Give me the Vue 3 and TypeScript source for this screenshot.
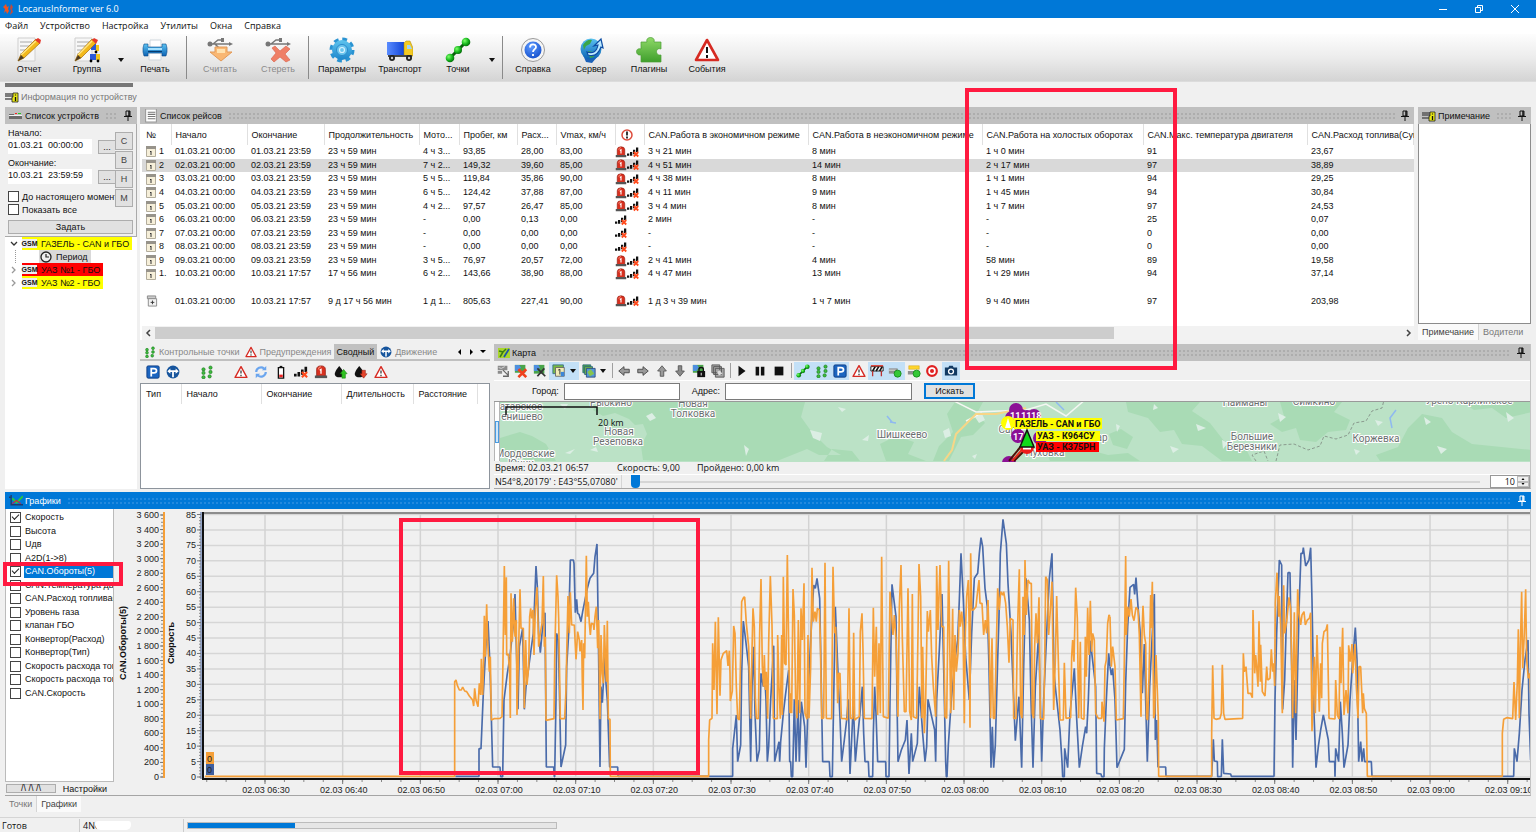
<script setup lang="ts">
import { ref } from 'vue'

interface ToolItem { icon: string; label: string; disabled?: boolean; menu?: boolean }
interface Trip { no: string; start: string; end: string; cells: string[]; siren: boolean; eco: string; rest: string[]; current?: boolean }

const menu = ['Файл', 'Устройство', 'Настройка', 'Утилиты', 'Окна', 'Справка']

const toolGroups: ToolItem[][] = [
  [
    { icon: 'report', label: 'Отчет' },
    { icon: 'group', label: 'Группа', menu: true },
    { icon: 'print', label: 'Печать' },
  ],
  [
    { icon: 'read', label: 'Считать', disabled: true },
    { icon: 'erase', label: 'Стереть', disabled: true },
  ],
  [
    { icon: 'gear', label: 'Параметры' },
    { icon: 'truck', label: 'Транспорт' },
    { icon: 'route', label: 'Точки', menu: true },
  ],
  [
    { icon: 'help', label: 'Справка' },
    { icon: 'globe', label: 'Сервер' },
    { icon: 'puzzle', label: 'Плагины' },
    { icon: 'warn', label: 'События' },
  ],
]

const day = (no: string, d: string, moto: string, km: string, fuel: string, v: string, siren: boolean, eco: string, rest: string[], dur = '23 ч 59 мин', endTime = '23:59'): Trip => ({
  no, start: `${d}.03.21 00:00`, end: `${d}.03.21 ${endTime}`, cells: [dur, moto, km, fuel, v], siren, eco, rest, current: d === '02',
})

const trips: Trip[] = [
  day('1', '01', '4 ч 3...', '93,85', '28,00', '83,00', true, '3 ч 21 мин', ['8 мин', '1 ч 0 мин', '91', '23,67']),
  day('2', '02', '7 ч 2...', '149,32', '39,60', '85,00', true, '4 ч 51 мин', ['14 мин', '2 ч 17 мин', '97', '38,89']),
  day('3', '03', '5 ч 5...', '119,84', '35,86', '90,00', true, '4 ч 38 мин', ['8 мин', '1 ч 1 мин', '94', '29,25']),
  day('4', '04', '6 ч 5...', '124,42', '37,88', '87,00', true, '4 ч 11 мин', ['9 мин', '1 ч 45 мин', '94', '30,84']),
  day('5', '05', '4 ч 2...', '97,57', '26,47', '85,00', true, '3 ч 4 мин', ['8 мин', '1 ч 7 мин', '97', '24,53']),
  day('6', '06', '-', '0,00', '0,13', '0,00', false, '2 мин', ['-', '-', '25', '0,07']),
  day('7', '07', '-', '0,00', '0,00', '0,00', false, '-', ['-', '-', '0', '0,00']),
  day('8', '08', '-', '0,00', '0,00', '0,00', false, '-', ['-', '-', '0', '0,00']),
  day('9', '09', '3 ч 5...', '76,97', '20,57', '72,00', true, '2 ч 41 мин', ['4 мин', '58 мин', '89', '19,58']),
  day('1.', '10', '6 ч 2...', '143,66', '38,90', '88,00', true, '4 ч 47 мин', ['13 мин', '1 ч 29 мин', '94', '37,14'], '17 ч 56 мин', '17:57'),
]
const total: Trip = {
  no: '', start: '01.03.21 00:00', end: '10.03.21 17:57', cells: ['9 д 17 ч 56 мин', '1 д 1...', '805,63', '227,41', '90,00'],
  siren: true, eco: '1 д 3 ч 39 мин', rest: ['1 ч 7 мин', '9 ч 40 мин', '97', '203,98'],
}

const quick = ['С', 'В', 'Н', 'М']
const summaryTools = ['park', 'move', '', 'dots', '', 'warn', 'refresh', 'battery', 'signal', 'siren', 'dropup', 'dropdown', 'warn']
const summaryCols = ['Тип', 'Начало', 'Окончание', 'Длительность', 'Расстояние', '']

const mapNav = ['left', 'right', 'up', 'down', 'lock', 'layersgray']
const mapLayers = [
  { icon: 'route', on: true }, { icon: 'dots', on: true }, { icon: 'park', on: true },
  { icon: 'warn', on: false }, { icon: 'barrier', on: true }, { icon: 'device', on: true },
  { icon: 'deviceyellow', on: false }, { icon: 'target', on: false }, { icon: 'camera', on: true },
]

const params = ref([
  { name: 'Скорость', on: true }, { name: 'Высота', on: false }, { name: 'Uдв', on: false },
  { name: 'A2D(1->8)', on: false }, { name: 'CAN.Обороты(5)', on: true }, { name: 'CAN.Температура двигателя', on: false },
  { name: 'CAN.Расход топлива(Сумм)', on: false }, { name: 'Уровень газа', on: false }, { name: 'клапан ГБО', on: false },
  { name: 'Конвертор(Расход)', on: false }, { name: 'Конвертор(Тип)', on: false }, { name: 'Скорость расхода топлива', on: false },
  { name: 'Скорость расхода топлива 2', on: false }, { name: 'CAN.Скорость', on: false },
])
const selected = 'CAN.Обороты(5)'

const city = ref('')
const address = ref('')
const begin = ref('01.03.21  00:00:00')
const finish = ref('10.03.21  23:59:59')
const untilNow = ref(false)
const showAll = ref(false)
const position = ref(0)
const speedStep = ref('10')

// Chart scales
const zeroY = 777
const speedY = (v: number) => zeroY - (v * 262.5) / 85
const rpmY = (v: number) => zeroY - (v * 262) / 3600
const speedTicks = Array.from({ length: 18 }, (_, i) => i * 5)
const speedMinor = Array.from({ length: 86 }, (_, i) => i)
const rpmTicks = Array.from({ length: 19 }, (_, i) => i * 200)
const rpmMinor = Array.from({ length: 73 }, (_, i) => i * 50)
const rpmText = (v: number) => (v >= 1000 ? `${Math.floor(v / 1000)} ${String(v % 1000).padStart(3, '0')}` : String(v))
const timeX = (i: number) => 265 + i * 77.67
const times = Array.from({ length: 17 }, (_, i) => {
  const m = 390 + i * 10
  return { x: timeX(i), label: `02.03 ${String(Math.floor(m / 60)).padStart(2, '0')}:${String(m % 60).padStart(2, '0')}` }
})
const timeMinor = Array.from({ length: 69 }, (_, i) => timeX(i / 4 - 0.75)).filter((x) => x < 1531)

// Telemetry, one entry per trip section: origin on the time scale and the trace in thirds of a pixel
const traces = [
  {
    x: 380,
    speed: 'M226 829H297V746H303L310 580 318 430 324 363 330 500 338 801 360 801 362 830 368 830 372 600 382 520 390 470 397 400 401 370 405 282 408 400 414 628 418 440 428 385 433 628 438 560 445 510 453 450 460 400 464 300 468 198 472 260 476 400 481 458 487 390 495 338 499 801 521 801 523 830 524 830 528 600 530 400 535 420 538 560 543 801 557 735 560 500 566 400 568 300 571 180 580 180 582 190 586 338 590 298 593 340 597 343 603 365 608 335 615 300 622 265 630 235 641 220 645 170 651 132 655 400 660 801 663 560 667 608 670 550 674 470 678 550 682 600 689 801 713 801 714 829H986',
    rpm: 'M-525 829H224V545L228 540 232 556 238 570 244 570 248 561 254 573 260 575 268 588 278 600 281 618 284 565 288 600 294 620 298 550 302 585 304 476 308 585 310 520 313 347 316 470 320 313 323 425 328 515 331 470 334 660 342 656 360 655 366 650 369 480 370 405 373 198 376 405 379 232 380 465 385 462 389 520 391 654 393 280 397 425 401 295 405 410 409 360 411 645 415 480 417 400 420 268 423 385 430 385 433 625 437 420 441 555 446 500 449 350 452 325 455 355 459 330 462 465 466 330 471 262 476 440 481 400 486 370 490 228 493 440 496 410 498 661 522 656 524 480 527 350 530 226 534 290 536 355 541 656 554 656 558 570 561 420 564 288 568 400 571 277 575 375 583 375 588 478 593 395 598 420 600 454 605 420 607 545 609 630 611 430 614 475 619 167 622 350 625 305 628 370 631 405 634 370 640 372 642 390 645 350 649 320 653 445 656 360 660 658 663 405 667 520 670 550 673 375 679 545 682 362 685 656 690 658 691 829H986',
  },
  {
    x: 700,
    speed: 'M27 829H98V746L103 700 109 645 113 785 122 735 125 520 130 363 137 420 146 500 152 785 156 560 161 440 165 640 171 785 178 750 183 520 190 560 194 520 198 600 202 785 206 740 212 600 221 437 224 785 237 725 239 785 242 725 250 640 257 580 266 510 269 785 272 785 274 830 278 830 283 598 288 785 291 700 294 600 298 785 304 605 310 650 314 680 318 803 322 680 326 550 332 420 341 255 346 265 351 235 359 295 363 500 368 785 388 785 390 830 397 830 401 600 406 320 410 420 414 520 420 655 425 785 433 720 440 660 445 598 450 822 454 740 460 605 466 785 472 720 480 640 487 560 491 700 495 785 505 785 507 830 518 830 520 700 524 560 528 640 533 785 557 785 558 830 567 830 570 600 576 253 588 350 591 600 594 785 604 750 616 720 621 660 627 822 634 700 638 785 652 730 655 640 658 560 668 700 675 785 680 740 684 598 695 650 704 690 707 785 710 600 718 450 726 282 731 500 737 785 739 830 741 830 745 735 754 600 765 480 773 420 778 300 783 160 790 300 797 470 808 600 815 400 823 235 833 220 838 160 843 113 848 140 855 265 862 320 867 500 873 803 877 680 881 803 886 735 893 480 897 350 901 160 909 58 919 130 924 250 933 400 946 722 957 590 965 803 971 500 978 235 984 310 988 360 993 600 999 803 1006 560 1016 400 1025 785 1031 600 1040 400 1048 235 1056 160 1062 520 1067 570 1080 690 1086 785 1088 830 1093 830 1094 745 1103 803 1110 640 1117 570 1123 505 1130 655 1138 803 1147 740 1157 680 1160 700 1165 600 1171 422 1180 500 1187 560 1190 820 1203 822 1205 830 1212 830 1213 745 1219 600 1226 460 1230 500',
    rpm: 'M0 829H26V720L29 660 36 655 38 430 42 570 46 365 51 643 55 352 60 587 63 480 70 460 80 452 84 498 88 452 90 520 91 603 97 573 99 480 101 378 105 400 109 560 113 655 118 660 122 460 125 305 131 292 134 291 139 370 146 440 152 656 156 450 159 325 163 380 166 590 169 655 175 656 179 400 183 237 187 500 191 560 193 465 196 570 199 515 203 656 206 430 211 228 216 375 220 655 232 656 233 405 237 560 241 656 245 405 247 645 250 230 254 490 258 495 262 165 267 500 270 640 272 580 275 640 279 267 283 345 287 600 291 655 295 360 299 640 303 325 307 420 312 250 315 640 321 658 324 405 327 655 332 500 336 203 340 365 345 335 349 365 352 325 358 330 361 420 365 656 371 654 375 188 379 655 395 656 399 200 404 400 407 380 413 610 416 520 420 520 424 655 436 656 442 660 447 325 451 655 458 655 461 398 464 660 470 655 478 650 481 395 486 340 489 450 493 655 516 656 520 323 524 530 529 380 533 645 537 430 541 640 545 170 550 650 565 655 570 275 575 350 579 405 583 345 588 420 594 650 598 320 603 195 607 415 613 635 618 635 624 265 629 635 634 660 637 282 640 650 650 655 654 400 657 192 662 290 666 655 668 440 673 700 677 600 682 333 685 395 691 330 695 470 700 560 707 650 710 198 714 390 720 195 725 380 731 380 735 650 740 655 746 182 752 640 758 326 761 630 765 405 769 515 774 460 778 330 781 380 785 335 789 380 793 670 796 400 800 290 805 240 807 350 810 683 812 160 815 330 820 330 828 320 831 290 837 240 840 310 846 310 851 405 856 360 860 400 864 300 868 450 872 655 876 415 880 655 884 655 889 440 893 265 898 330 902 275 908 285 911 275 917 310 922 380 927 488 931 355 939 360 941 655 948 655 951 470 954 340 958 208 962 640 966 655 969 290 973 405 975 180 979 345 984 240 990 250 994 250 997 640 1001 655 1004 440 1008 340 1012 430 1017 292 1021 655 1031 658 1034 500 1037 230 1042 240 1046 405 1050 345 1056 245 1061 630 1066 480 1070 288 1075 480 1080 660 1090 660 1093 488 1098 655 1112 653 1115 470 1118 420 1122 485 1127 263 1132 355 1136 655 1141 425 1144 655 1152 658 1156 410 1159 530 1163 323 1167 465 1171 302 1175 455 1178 400 1183 420 1187 640 1195 655 1205 655 1206 605 1212 665 1215 500 1219 480 1223 370 1227 345 1230 350',
  },
  {
    x: 1110,
    speed: 'M0 500L4 525 8 505 15 600 21 803 43 748 47 550 53 380 60 262 71 253 74 283 78 233 84 320 90 390 97 580 103 432 108 640 112 785 119 560 126 420 133 282 136 720 140 660 144 801 167 801 168 829H305L310 718 313 783 322 785 323 830 334 829 337 718 341 820 362 822 364 829 492 829 495 600 500 400 508 180 515 195 518 628 524 540 528 400 534 218 540 218 545 500 548 803 553 540 558 720 563 500 568 300 573 160 578 160 580 143 587 198 597 180 602 143 606 300 612 640 618 803 625 740 632 690 640 645 655 720 658 785 674 785 675 830 677 745 686 785 691 605 697 700 702 803 714 735 720 600 728 480 736 383 741 480 746 785 752 725 756 785 761 745 764 785 784 785 786 829H1211L1213 745 1221 785 1228 700 1236 570 1245 480 1254 420 1257 640 1262 780',
    rpm: 'M0 350L4 500 8 440 15 500 19 660 40 656 43 480 47 168 49 405 53 320 58 350 63 297 67 345 72 362 78 322 84 330 88 405 93 650 96 400 99 317 103 405 107 430 110 655 113 660 117 530 122 285 123 385 127 245 131 655 134 640 138 465 145 656 146 829H305V700L308 496 312 655 318 658 330 655 334 640 337 494 341 640 345 658 398 655 400 460 403 515 408 500 414 580 422 580 427 593 429 330 434 520 437 465 440 500 444 560 447 364 451 545 452 434 457 575 465 588 470 500 473 540 480 535 484 448 488 515 491 490 494 558 496 310 501 218 506 350 508 288 512 375 517 640 521 256 524 400 530 365 537 292 542 325 548 655 553 337 557 640 563 268 567 340 572 375 576 345 582 335 586 375 592 360 598 355 602 338 606 694 613 470 616 640 621 405 628 635 632 490 635 595 637 430 642 395 648 390 652 373 657 655 675 657 677 540 682 645 687 657 690 440 693 550 698 383 702 645 708 570 714 640 716 436 721 485 726 432 728 520 735 432 739 560 744 655 747 500 752 500 758 640 760 580 763 625 769 640 772 829H1177V700L1181 658 1190 653 1208 656 1212 546 1217 660 1222 545 1225 388 1228 655 1231 448 1235 275 1238 505 1243 400 1247 268 1250 480 1255 535 1260 520 1262 580',
  },
]

const places = [
  { x: 521, y: 410, t: 'атарское' }, { x: 522, y: 420, t: 'енишево' }, { x: 611, y: 406, t: 'Рыбкино' },
  { x: 693, y: 407, t: 'Новая' }, { x: 693, y: 417, t: 'Толковка' }, { x: 619, y: 435, t: 'Новая' },
  { x: 618, y: 445, t: 'Резеповка' }, { x: 525, y: 457, t: 'Мордовские' }, { x: 521, y: 467, t: 'Юнки' },
  { x: 902, y: 438, t: 'Шишкеево' }, { x: 1245, y: 406, t: 'Найманы' }, { x: 1314, y: 405, t: 'Симкино' },
  { x: 1469, y: 404, t: 'Урено-Карлинское' }, { x: 1252, y: 440, t: 'Большие' }, { x: 1252, y: 450, t: 'Березники' },
  { x: 1376, y: 442, t: 'Коржевка' }, { x: 1102, y: 441, t: 'ар' }, { x: 1045, y: 456, t: 'Пуховка' }, { x: 1010, y: 433, t: 'Сара' },
]
</script>

<template>
  <div class="app">
    <svg class="defs" width="0" height="0" aria-hidden="true">
      <defs>
        <linearGradient id="gBlue" x1="0" y1="0" x2="0" y2="1"><stop offset="0" stop-color="#5cc3f2" /><stop offset="1" stop-color="#0b62b4" /></linearGradient>
        <linearGradient id="gGear" x1="0" y1="0" x2="0" y2="1"><stop offset="0" stop-color="#5fc4ee" /><stop offset="1" stop-color="#1c86cc" /></linearGradient>
        <linearGradient id="gGreen" x1="0" y1="0" x2="0" y2="1"><stop offset="0" stop-color="#8fd968" /><stop offset="1" stop-color="#3f9f2c" /></linearGradient>
        <linearGradient id="gCab" x1="0" y1="0" x2="1" y2="0"><stop offset="0" stop-color="#5a8cff" /><stop offset="1" stop-color="#1346d8" /></linearGradient>
        <radialGradient id="gBall" cx=".35" cy=".35" r=".7"><stop offset="0" stop-color="#7dff6a" /><stop offset=".6" stop-color="#12b31a" /><stop offset="1" stop-color="#046a08" /></radialGradient>
        <radialGradient id="gHelp" cx=".4" cy=".3" r=".8"><stop offset="0" stop-color="#5f9cff" /><stop offset="1" stop-color="#0e49c8" /></radialGradient>
      </defs>
      <symbol id="logo" viewBox="0 0 12 12"><path d="M1 4l3-3 1 3 2-1-1 3 1 2-2 3-1-3-2 2 1-4z" fill="#f0531f" /><path d="M9 1l2 3-1 2 1 3-3 3 1-4-1-3z" fill="#c24a3c" /></symbol>
      <symbol id="report" viewBox="0 0 26 26"><path d="M2 1h17v23H2z" fill="#f7f7f7" stroke="#cfcfcf" /><path d="M4 5h12M4 9h11M4 13h8M4 17h5" stroke="#a8a8a8" /><path d="M2 24l3-7L20 2l4 4L8 21z" fill="#f2b91c" stroke="#a36a08" stroke-width=".7" /><path d="M5 18L20 4" stroke="#ffe583" stroke-width="1.5" /><path d="M19 3l3-2 3 2-1 4z" fill="#e4392c" /><path d="M2 24l3-6 3 3z" fill="#4b3a24" /></symbol>
      <symbol id="group" viewBox="0 0 26 26"><path d="M1 1h17v23H1z" fill="#f7f7f7" stroke="#cfcfcf" /><path d="M3 5h12M3 9h11M3 13h8M3 17h5" stroke="#a8a8a8" /><path d="M17 7h5v6h-5zM16 17h6v6h-6z" fill="#2a59d8" /><path d="M22 8h3v6h-3zM22 17h4v6h-4z" fill="#f1c51c" /><circle cx="22" cy="15" r="1.4" /><circle cx="24" cy="24" r="1.4" /><circle cx="17" cy="24" r="1.4" /><path d="M1 24l3-7L18 2l4 4L7 21z" fill="#f2b91c" stroke="#a36a08" stroke-width=".7" /><path d="M4 18L18 4" stroke="#ffe583" stroke-width="1.5" /><path d="M18 3l2-2 4 2-2 4z" fill="#e4392c" /><path d="M1 24l3-6 3 3z" fill="#4b3a24" /></symbol>
      <symbol id="print" viewBox="0 0 26 26"><path d="M8 3h11v8H8zM7 16h12v7H7z" fill="#fff" stroke="#cfd6dc" /><path d="M2 7h4v3h14V7h4l1 4v4l-1 4h-4v-3H6v3H2l-1-4v-4z" fill="url(#gBlue)" stroke="#0a4b8c" stroke-width=".6" /><path d="M6 11h14v2H6z" fill="#a8e2ff" /><path d="M6 14h14v1H6z" fill="#073c70" /></symbol>
      <symbol id="read" viewBox="0 0 26 26"><path d="M2 7h21M6 7l5-4h4M8 7l5 5h4" stroke="#777" stroke-width="1.5" fill="none" /><circle cx="3" cy="7" r="2.5" fill="#777" /><path d="M22 5l4 2-4 2z" fill="#777" /><path d="M14 1h3v4h-3z" fill="#777" /><path d="M8 10h12v5h5L14 24 3 15h5z" fill="#f9b773" stroke="#e39a58" /><path d="M10 12h8v4H10z" fill="#ffe2b0" /></symbol>
      <symbol id="erase" viewBox="0 0 26 26"><path d="M2 7h21M6 7l5-4h4" stroke="#777" stroke-width="1.5" fill="none" /><circle cx="3" cy="7" r="2.5" fill="#777" /><path d="M22 5l4 2-4 2z" fill="#777" /><path d="M14 1h3v4h-3z" fill="#777" /><path d="M10 9l5 5 6-5 4 3-5 5 5 6-4 2-6-5-6 5-3-3 5-6-4-5z" fill="#ef7f66" stroke="#d9604a" stroke-width=".6" /></symbol>
      <symbol id="gear" viewBox="0 0 26 26"><circle cx="13" cy="13" r="10.500" fill="none" stroke="#2a93d2" stroke-width="4" stroke-dasharray="4.600 3.640" /><circle cx="13" cy="13" r="10" fill="url(#gGear)" /><circle cx="13" cy="13" r="5.500" fill="#6cc6ee" stroke="#2a8acb" /><circle cx="13" cy="13" r="2.500" fill="none" stroke="#d9f2ff" stroke-width="1.200" /></symbol>
      <symbol id="truck" viewBox="0 0 26 26"><path d="M0 5h17v13H0z" fill="url(#gCab)" /><path d="M17 6l2-2h4l3 7v8h-9z" fill="#f4ca22" stroke="#a58105" stroke-width=".5" /><path d="M20 8h3l2 4h-5z" fill="#9fd4f5" /><path d="M1 18h24v2H1z" fill="#454545" /><circle cx="5" cy="21" r="3" fill="#222" /><circle cx="5" cy="21" r="1.200" fill="#ccc" /><circle cx="22" cy="21" r="3" fill="#222" /><circle cx="22" cy="21" r="1.200" fill="#ccc" /></symbol>
      <symbol id="route" viewBox="0 0 26 26"><path d="M5 21l8-8 8-8" stroke="#0a5f0d" stroke-width="3" /><circle cx="5" cy="21" r="4.300" fill="url(#gBall)" /><circle cx="13" cy="13" r="4" fill="url(#gBall)" /><circle cx="21" cy="5" r="4.300" fill="url(#gBall)" /></symbol>
      <symbol id="help" viewBox="0 0 26 26"><circle cx="13" cy="13" r="11.500" fill="#f5f5f5" stroke="#9a9a9a" /><circle cx="13" cy="13" r="8.500" fill="url(#gHelp)" /><path d="M10 10.500c0-4 6-4 6-.5 0 2-3 2.500-3 5M13 17v2" stroke="#fff" stroke-width="1.800" fill="none" /></symbol>
      <symbol id="globe" viewBox="0 0 26 26"><path d="M5 18l3 7 6 1 6-7z" fill="#1d62b8" /><circle cx="13" cy="12" r="10.500" fill="url(#gBlue)" /><path d="M5 8q4-6 9-5l-2 4-4 2-2 4zM10 14l5 1 1 5-4 1z" fill="#3aa648" /><path d="M9 15q9 3 11-7l-4 1 7-7 2 9-2-1q-4 11-13 8z" fill="#bdeaff" stroke="#0d4da3" stroke-width="1.200" /></symbol>
      <symbol id="puzzle" viewBox="0 0 26 26"><path d="M5 5h6c-2-6 9-6 7 0h7v7c-6-2-6 7 0 6v7H5v-7c-6 1-6-8 0-6z" fill="url(#gGreen)" stroke="#4b9d33" stroke-width=".7" /></symbol>
      <symbol id="warn" viewBox="0 0 26 26"><path d="M13 3L24 23H2z" fill="#fff" stroke="#d62a22" stroke-width="2.600" stroke-linejoin="round" /><path d="M13 10v6M13 18v3" stroke="#111" stroke-width="2" /></symbol>
      <symbol id="dots" viewBox="0 0 16 16"><circle v-for="(p, i) in [[4, 5], [12, 3], [4, 9], [12, 8], [4, 14], [11, 13]]" :key="i" :cx="p[0]" :cy="p[1]" r="1.900" fill="#3dbb3d" stroke="#0d6b12" stroke-width=".6" /></symbol>
      <symbol id="park" viewBox="0 0 16 16"><rect x="1" y="1" width="14" height="14" rx="1.500" fill="#1c65c0" stroke="#0b3a80" /><path d="M6 13V4h3q3 0 3 2.500T9 9H6" stroke="#fff" stroke-width="2" fill="none" /></symbol>
      <symbol id="move" viewBox="0 0 16 16"><circle cx="8" cy="8" r="7.300" fill="#17559d" /><path d="M8 14V7M4 7h8" stroke="#fff" stroke-width="2" /><path d="M5 4v6L1.500 7zM11 4v6l3.500-3z" fill="#fff" /></symbol>
      <symbol id="refresh" viewBox="0 0 16 16"><path d="M2.500 8a5.500 5.500 0 0 1 9-4M13.500 8a5.500 5.500 0 0 1-9 4" fill="none" stroke="#6aa5ee" stroke-width="2.500" /><path d="M9 6h5V1zM7 10H2v5z" fill="#6aa5ee" /></symbol>
      <symbol id="battery" viewBox="0 0 16 16"><path d="M5 3h6v12H5z" fill="#fff" stroke="#111" stroke-width="1.500" /><path d="M6.500 1h3v2h-3z" fill="#111" /><path d="M6 11h4v3H6z" fill="#e22" /></symbol>
      <symbol id="signal" viewBox="0 0 16 16"><path d="M0 10h3v3H0zM4 8h3v5H4zM8 5h3v6H8zM12 2h3v6h-3z" fill="#111" /><path d="M9 8l6 6M15 8l-6 6" stroke="#ff4a1c" stroke-width="2.400" /></symbol>
      <symbol id="siren" viewBox="0 0 16 16"><path d="M3 13V5q0-4 5-4t5 4v8z" fill="#d8301f" stroke="#8f1409" stroke-width=".8" /><path d="M5 5q0-3 3-3" stroke="#ff9a85" fill="none" /><path d="M6.500 6L8 5v5" stroke="#fff" stroke-width="1.500" fill="none" /><path d="M1 12h14v3H1z" fill="#555" /></symbol>
      <symbol id="dropup" viewBox="0 0 16 16"><path d="M6 1q6 7 5 10t-5 3-5-3T6 1" fill="#111" /><path d="M11 5l4 5h-2v5H9v-5H7z" fill="#2fc321" stroke="#137a0c" stroke-width=".6" /></symbol>
      <symbol id="dropdown" viewBox="0 0 16 16"><path d="M6 1q6 7 5 10t-5 3-5-3T6 1" fill="#111" /><path d="M11 15l4-5h-2V6H9v4H7z" fill="#e5442c" stroke="#8e1c10" stroke-width=".6" /></symbol>
      <symbol id="mapsave" viewBox="0 0 16 16"><path d="M2 2h11v5H2zM2 8h5v3H2z" fill="#8b8b8b" /><path d="M3 4l3 1 4-2" stroke="#ddd" fill="none" /><path d="M8 7l6 6M14 8v6H8" stroke="#666" stroke-width="1.500" fill="none" /></symbol>
      <symbol id="mapdel" viewBox="0 0 16 16"><path d="M1 1h12v9H1z" fill="#4aa44a" /><path d="M1 1h5l2 3-3 4H1z" fill="#4f8fe0" /><path d="M5 6l9 9M14 6l-9 9" stroke="#f0401c" stroke-width="3" /></symbol>
      <symbol id="mapfix" viewBox="0 0 16 16"><path d="M1 1h12v10H1z" fill="#4aa44a" /><path d="M1 1h5l2 3-3 4H1z" fill="#4f8fe0" /><path d="M5 5l9 9M13 5l-8 9" stroke="#333" stroke-width="2" /></symbol>
      <symbol id="mapone" viewBox="0 0 16 16"><path d="M1 1h12v10H1z" fill="#78b944" stroke="#36708c" /><path d="M4 4h10v10H4z" fill="#f1ebb6" stroke="#666" /><path d="M7 7l2-1v6" stroke="#222" fill="none" /><path d="M10 9h4v5h-4z" fill="#3b86d8" /></symbol>
      <symbol id="layers" viewBox="0 0 16 16"><path d="M1 1h9v9H1z" fill="#4aa44a" stroke="#2e6a7c" /><path d="M3 3h9v9H3z" fill="#78b944" stroke="#2e6a7c" /><path d="M5 5h10v10H5z" fill="#5499d8" stroke="#2e4a7c" /><path d="M6 9l4-3 4 5-5 3z" fill="#86c44c" /></symbol>
      <symbol id="layersgray" viewBox="0 0 16 16"><path d="M1 1h9v9H1zM3 3h9v9H3zM5 5h10v10H5z" fill="#a5a5a5" stroke="#555" /><path d="M7 9l3-2 3 4-4 2z" fill="#ddd" /></symbol>
      <symbol id="lock" viewBox="0 0 16 16"><path d="M1 1h12v9H1z" fill="#4aa44a" /><path d="M1 1h5l2 3-3 4H1z" fill="#4f8fe0" /><path d="M6 8h9v7H6z" fill="#111" /><path d="M8 8V6q0-2 2.500-2T13 6v2" stroke="#111" stroke-width="1.500" fill="none" /><path d="M10 10h1v3h-1z" fill="#fff" /></symbol>
      <symbol id="left" viewBox="0 0 16 16"><path d="M2 8l6-5v3h6v4H8v3z" fill="#999" stroke="#444" /></symbol>
      <symbol id="right" viewBox="0 0 16 16"><path d="M14 8L8 3v3H2v4h6v3z" fill="#999" stroke="#444" /></symbol>
      <symbol id="up" viewBox="0 0 16 16"><path d="M8 2l5 6h-3v6H6V8H3z" fill="#999" stroke="#555" /></symbol>
      <symbol id="down" viewBox="0 0 16 16"><path d="M8 14l5-6h-3V2H6v6H3z" fill="#888" stroke="#555" /></symbol>
      <symbol id="play" viewBox="0 0 16 16"><path d="M4 2l8 6-8 6z" fill="#111" /></symbol>
      <symbol id="pause" viewBox="0 0 16 16"><path d="M3 3h4v10H3zM9 3h4v10H9z" fill="#111" /></symbol>
      <symbol id="stop" viewBox="0 0 16 16"><path d="M3 3h10v10H3z" fill="#111" /></symbol>
      <symbol id="barrier" viewBox="0 0 16 16"><path d="M1 3h14v5H1z" fill="#fff" stroke="#111" /><path d="M3 8l3-5M7 8l3-5M11 8l3-5" stroke="#111" stroke-width="1.800" /><path d="M1 2h14" stroke="#e23b2e" stroke-width="1.500" /><path d="M3 8v6M13 8v6" stroke="#b33" stroke-width="1.500" /></symbol>
      <symbol id="device" viewBox="0 0 16 16"><path d="M1 5h10v6H1z" fill="#8f8f8f" /><path d="M1 7h8" stroke="#eee" /><circle cx="11" cy="11" r="4" fill="#35c837" stroke="#168c1b" /></symbol>
      <symbol id="deviceyellow" viewBox="0 0 16 16"><path d="M2 2h12v4H2z" fill="#ffd52b" stroke="#c79b10" stroke-width=".5" /><path d="M1 8h9v4H1z" fill="#8f8f8f" /><circle cx="11" cy="11" r="4" fill="#35c837" stroke="#168c1b" /></symbol>
      <symbol id="target" viewBox="0 0 16 16"><circle cx="8" cy="8" r="5.500" fill="#fff" stroke="#e02020" stroke-width="2.500" /><circle cx="8" cy="8" r="2.300" fill="#e02020" /></symbol>
      <symbol id="camera" viewBox="0 0 16 16"><path d="M1 4h4l1-2h4l1 2h4v9H1z" fill="#123a63" /><circle cx="8" cy="8.500" r="3.500" fill="#fff" /><circle cx="8" cy="8.500" r="2" fill="#123a63" /></symbol>
      <symbol id="info" viewBox="0 0 14 12"><path d="M0 3h8M0 5h8M0 8h8" stroke="#555" stroke-width="1.400" /><path d="M8 2h5v9H7V6h1z" fill="#e9e916" stroke="#222" stroke-width=".8" /><path d="M10.500 3.500v1M10.500 6v4" stroke="#111" stroke-width="1.300" /></symbol>
      <symbol id="devlist" viewBox="0 0 14 12"><path d="M0 4h5v5H0zM3 6h10v3H3z" fill="#6b6b6b" /><path d="M0 5.500h13" stroke="#f3f3f3" /><path d="M6 3.500h2" stroke="#f22" /><path d="M9 3.500h3" stroke="#2c2" /></symbol>
      <symbol id="sheet" viewBox="0 0 12 13"><path d="M1 0h10v12H1z" fill="#fff" stroke="#999" /><path d="M3 3h7M3 5h7M3 7h7M3 9h7" stroke="#777" /></symbol>
      <symbol id="mapicon" viewBox="0 0 12 10"><path d="M0 0h12v10H0z" fill="#a8d62b" /><path d="M1 3l4 1 3-3M2 9l3-5" stroke="#3a7c12" stroke-width="1.500" fill="none" /><path d="M6 9l5-8" stroke="#1d53a8" stroke-width="1.800" /></symbol>
      <symbol id="plot" viewBox="0 0 13 11"><path d="M2 0v9h11M0 2h2" stroke="#1b3d70" stroke-width="1.300" fill="none" /><path d="M3 3l4 4 6-6" stroke="#28c840" stroke-width="1.800" fill="none" /><path d="M3 8l4-3 4 3" stroke="#c24" fill="none" /></symbol>
      <symbol id="pin" viewBox="0 0 8 11"><path d="M2 1h4v5H2zM0 6.500h8M4 7v4" stroke="currentColor" fill="none" stroke-width="1" /><path d="M5 1v5" stroke="currentColor" stroke-width="1.500" /></symbol>
      <symbol id="cal" viewBox="0 0 10 11"><path d="M.5 1.500h9v9h-9z" fill="#f6efd9" stroke="#b3ad9c" /><path d="M0 0h10v3H0z" fill="#97938a" /><path d="M4 6l1-1v4" stroke="#333" fill="none" /></symbol>
      <symbol id="sum" viewBox="0 0 12 13"><path d="M1 1h9v3H1z" fill="#ccc" stroke="#888" /><path d="M2 4h9v8H2z" fill="#f2f2f2" stroke="#888" /><path d="M6.500 6v4M4.500 8h4" stroke="#333" /></symbol>
      <symbol id="clock" viewBox="0 0 12 12"><circle cx="6" cy="6" r="5" fill="#eee" stroke="#222" stroke-width="1.300" /><path d="M6 3v3h3" stroke="#222" stroke-width="1.200" fill="none" /></symbol>
      <symbol id="caret" viewBox="0 0 6 4"><path d="M0 0h6L3 4z" fill="#111" /></symbol>
      <symbol id="alert" viewBox="0 0 12 12"><circle cx="6" cy="6" r="5" fill="#fff" stroke="#dd4b3b" stroke-width="1.500" /><path d="M6 2.500v4M6 7.500v2" stroke="#222" stroke-width="1.800" /></symbol>
    </svg>

    <header class="titlebar">
      <svg class="i12"><use href="#logo" /></svg>
      <span class="grow">LocarusInformer ver 6.0</span>
      <button class="win" aria-label="Свернуть"><svg class="i10" viewBox="0 0 10 10"><path d="M1 5.500h8" stroke="#fff" /></svg></button>
      <button class="win" aria-label="Окно"><svg class="i10" viewBox="0 0 10 10"><path d="M1.500 3.500h5v5h-5zM3.500 3V1.500h5v5H7" stroke="#fff" fill="none" /></svg></button>
      <button class="win" aria-label="Закрыть"><svg class="i10" viewBox="0 0 10 10"><path d="M1 1l8 8M9 1L1 9" stroke="#fff" /></svg></button>
    </header>

    <nav class="menubar"><button v-for="m in menu" :key="m">{{ m }}</button></nav>

    <div class="toolbar">
      <div v-for="(g, gi) in toolGroups" :key="gi" class="tgroup">
        <template v-for="t in g" :key="t.label">
          <button class="tool" :disabled="t.disabled"><svg class="i26"><use :href="'#' + t.icon" /></svg><span>{{ t.label }}</span></button>
          <button v-if="t.menu" class="tmenu" :aria-label="t.label + ': меню'"><svg class="caret"><use href="#caret" /></svg></button>
        </template>
      </div>
    </div>

    <div class="infostrip">
      <div class="infobar"></div>
      <div class="infotext"><svg class="i14"><use href="#info" /></svg>Информация по устройству</div>
    </div>

    <main class="workspace">
      <aside class="side">
        <div class="cap"><svg class="i14"><use href="#devlist" /></svg><span>Список устройств</span><i class="grip"></i><svg class="pin"><use href="#pin" /></svg></div>
        <div class="filter">
          <div class="filtertop">
            <div class="fields">
              <label for="begin">Начало:</label>
              <div class="dt"><input id="begin" v-model="begin" type="text" /><button>...</button></div>
              <label for="finish" class="second">Окончание:</label>
              <div class="dt"><input id="finish" v-model="finish" type="text" /><button>...</button></div>
              <label class="chk first"><input v-model="untilNow" type="checkbox" />До настоящего момента</label>
              <label class="chk"><input v-model="showAll" type="checkbox" />Показать все</label>
            </div>
            <div class="quick"><button v-for="q in quick" :key="q">{{ q }}</button></div>
          </div>
          <button class="apply">Задать</button>
        </div>
        <ul class="tree">
          <li><svg class="chev" viewBox="0 0 8 8"><path d="M1 2l3 3 3-3" fill="none" stroke="#333" stroke-width="1.300" /></svg><span class="node yellow"><b>GSM</b>ГАЗЕЛЬ - CAN и ГБО</span></li>
          <li class="child"><span class="node period"><svg class="i12"><use href="#clock" /></svg>Период</span></li>
          <li><svg class="chev" viewBox="0 0 8 8"><path d="M2 1l3 3-3 3" fill="none" stroke="#999" stroke-width="1.300" /></svg><span class="node red"><b>GSM</b>УАЗ №1 - ГБО</span></li>
          <li><svg class="chev" viewBox="0 0 8 8"><path d="M2 1l3 3-3 3" fill="none" stroke="#999" stroke-width="1.300" /></svg><span class="node yellow"><b>GSM</b>УАЗ №2 - ГБО</span></li>
        </ul>
      </aside>

      <div class="content">
        <div class="upper">
          <section class="trips">
            <div class="cap"><svg class="i14"><use href="#sheet" /></svg><span>Список рейсов</span><i class="grip"></i><svg class="pin"><use href="#pin" /></svg></div>
            <div class="tripbox">
              <table class="triptable">
                <colgroup><col v-for="n in 14" :key="n" :class="'c' + n" /></colgroup>
                <thead>
                  <tr>
                    <th>№</th><th>Начало</th><th>Окончание</th><th>Продолжительность</th><th>Мото...</th><th>Пробег, км</th><th>Расх...</th><th>Vmax, км/ч</th>
                    <th><svg class="i12"><use href="#alert" /></svg></th>
                    <th>CAN.Работа в экономичном режиме</th><th>CAN.Работа в неэкономичном режиме</th><th>CAN.Работа на холостых оборотах</th><th>CAN.Макс. температура двигателя</th><th>CAN.Расход топлива(Сумм)</th>
                  </tr>
                </thead>
                <tbody>
                  <tr v-for="t in trips" :key="t.start" :class="{ current: t.current }">
                    <td class="num"><svg class="cal"><use href="#cal" /></svg>{{ t.no }}</td>
                    <td>{{ t.start }}</td><td>{{ t.end }}</td>
                    <td v-for="(c, i) in t.cells" :key="i">{{ c }}</td>
                    <td class="flags"><svg v-if="t.siren" class="i12"><use href="#siren" /></svg><svg class="i12"><use href="#signal" /></svg></td>
                    <td>{{ t.eco }}</td>
                    <td v-for="(c, i) in t.rest" :key="i">{{ c }}</td>
                  </tr>
                  <tr><td colspan="14">&nbsp;</td></tr>
                  <tr>
                    <td class="num"><svg class="i12"><use href="#sum" /></svg></td>
                    <td>{{ total.start }}</td><td>{{ total.end }}</td>
                    <td v-for="(c, i) in total.cells" :key="i">{{ c }}</td>
                    <td class="flags"><svg class="i12"><use href="#siren" /></svg><svg class="i12"><use href="#signal" /></svg></td>
                    <td>{{ total.eco }}</td>
                    <td v-for="(c, i) in total.rest" :key="i">{{ c }}</td>
                  </tr>
                </tbody>
              </table>
              <div class="hscroll">
                <button aria-label="Влево"><svg class="i8" viewBox="0 0 8 8"><path d="M5 1L2 4l3 3" fill="none" stroke="#444" stroke-width="1.500" /></svg></button>
                <div class="track"><div class="thumb"></div></div>
                <button aria-label="Вправо"><svg class="i8" viewBox="0 0 8 8"><path d="M3 1l3 3-3 3" fill="none" stroke="#444" stroke-width="1.500" /></svg></button>
              </div>
            </div>
          </section>

          <section class="notes">
            <div class="cap"><svg class="i14"><use href="#info" /></svg><span>Примечание</span><i class="grip"></i><svg class="pin"><use href="#pin" /></svg></div>
            <textarea aria-label="Примечание"></textarea>
            <div class="tabs"><button class="on">Примечание</button><button>Водители</button></div>
          </section>
        </div>

        <div class="lower">
          <section class="summary">
            <div class="stabs">
              <button><svg class="i12"><use href="#dots" /></svg>Контрольные точки</button>
              <button><svg class="i12"><use href="#warn" /></svg>Предупреждения</button>
              <button class="on">Сводный</button>
              <button><svg class="i12"><use href="#move" /></svg>Движение</button>
              <span class="scrolls">
                <svg class="i8" viewBox="0 0 8 8"><path d="M6 1v6L3 4z" /></svg><svg class="i8" viewBox="0 0 8 8"><path d="M3 1v6l3-3z" /></svg><svg class="i8" viewBox="0 0 8 8"><path d="M1 2h6L4 5z" /></svg>
              </span>
            </div>
            <div class="stools">
              <template v-for="(s, i) in summaryTools" :key="i">
                <button v-if="s" :aria-label="s"><svg class="i14"><use :href="'#' + s" /></svg></button><span v-else class="gap"></span>
              </template>
            </div>
            <div class="sbox">
              <table class="stable">
                <colgroup><col class="s1" /><col class="s2" /><col class="s2" /><col class="s3" /><col class="s4" /><col /></colgroup>
                <thead><tr><th v-for="c in summaryCols" :key="c">{{ c }}</th></tr></thead>
              </table>
            </div>
          </section>

          <section class="map">
            <div class="cap"><svg class="i12"><use href="#mapicon" /></svg><span>Карта</span><i class="grip"></i><svg class="pin"><use href="#pin" /></svg></div>
            <div class="mtools">
              <div class="mg g3"><button v-for="k in ['mapsave', 'mapdel', 'mapfix']" :key="k" :aria-label="k"><svg class="i14"><use :href="'#' + k" /></svg></button></div>
              <button class="drop on" aria-label="Слой"><svg class="i14"><use href="#mapone" /></svg><svg class="caret"><use href="#caret" /></svg></button>
              <button class="drop" aria-label="Слои"><svg class="i14"><use href="#layers" /></svg><svg class="caret"><use href="#caret" /></svg></button>
              <i class="vsep"></i>
              <div class="mg g6"><button v-for="k in mapNav" :key="k" :aria-label="k"><svg class="i14"><use :href="'#' + k" /></svg></button></div>
              <i class="vsep"></i>
              <div class="mg g3"><button v-for="k in ['play', 'pause', 'stop']" :key="k" :aria-label="k"><svg class="i14"><use :href="'#' + k" /></svg></button></div>
              <i class="vsep"></i>
              <div class="mg g9"><button v-for="k in mapLayers" :key="k.icon" :class="{ on: k.on }" :aria-label="k.icon"><svg class="i14"><use :href="'#' + k.icon" /></svg></button></div>
            </div>
            <form class="search" @submit.prevent>
              <label for="city">Город:</label><input id="city" v-model="city" type="text" class="city" />
              <label for="addr">Адрес:</label><input id="addr" v-model="address" type="text" class="addr" />
              <button>Искать</button>
            </form>
            <div class="maprow">
              <div class="splitter"><span></span></div>
              <svg class="canvas">
                <rect width="100%" height="100%" fill="#bbe2c6" />
                <g transform="translate(-500 -402)">
                  <g fill="#a9dbb5">
                    <path d="M598 402l-5 8 10 6 12-3 14 6 6 6 8-1 4 10-6 12 2 14 18 1h116l30-12 12 6 22 0-14-8-16-16-10-14 4-15h-40zM824 461l8-12 20 2 8 10zM500 438l20-6 12 4 14 8 10 17h-30l-12-10-14-2z" />
                    <path d="M955 402l-8 12 6 18-14 14-6 15h16l12-24 12-2 12-12-8-10 6-11zM880 444l16-8 18 6-6 12 18 7h-40zM1050 461l-8-20 16 8 20-2 30 8 20-2 12 8zM1109 434l12-5 12 8-6 12-14-4zM1126 402l2 10 20 6 12 14 14-2 8 14 20 2 20 15h30l-6-12-22-8-14-18-18-12 8-9z" />
                    <path d="M1280 402l4 14-14 8 12 8 14-4 4 12 16 2 12-10 18-2 4-10-16-8 8-10zM1408 428l14-14 20 4 10 14 20 12 60 6v11H1380l-4-6 22-8zM1462 402l12 8 18-2 14 10 26-6v-10zM500 402h24l-8 7-16 2z" />
                  </g>
                  <g fill="#dceee4">
                    <path d="M646 416l6-3 4 5-6 3zM590 450l6-3 2 5zM810 430l12 3-2 8-7-3zM744 445l5 4-3 7zM862 440l7-5-1 6zM943 431l6-3 2 8-6 2zM975 417l7-3 3 6-6 3zM972 456l5-2-2 5zM838 407l8 2-4 3zM1116 424l4 2-3 6zM1154 404l4 4-5 2zM1196 424l10 4-8 3zM1222 440l6 3-5 6zM1278 413l8 4-6 5zM1170 446l9 3-6 4zM1375 420l8 2-5 4zM1424 417l7 5-5 3zM1437 446l10 3-6 5zM1506 412l8 6-6 4zM1354 449l6 2-4 4zM565 453l10-4-5 5zM560 404l8 0-3 5z" />
                  </g>
                  <path d="M952 400l24 12 50-2 20-6 20 12 20-17M982 413l-16 8M1020 430l60-10" fill="none" stroke="#f4f6f2" stroke-width="1.500" />
                  <path d="M944 461l8-11 4-16 20-20 20 0 30-6" fill="none" stroke="#f7d687" stroke-width="2" />
                  <path d="M887 416l5 6-2 0 6 1M1396 410l-6 8 2 10M1056 402l8 8" fill="none" stroke="#8fb9f0" stroke-width="1.500" />
                  <path d="M1256 461l-4-6 12-4 4 10M1276 461l4-16 14-1 14 6 12-4 4-10 12 3 12-4 6-12 12-2 6-10 10-3 2-8" fill="none" stroke="#8a9a8e" stroke-dasharray="3 2" />
                  <g class="places"><text v-for="p in places" :key="p.t + p.y" :x="p.x" :y="p.y">{{ p.t }}</text></g>
                  <path d="M506 415v-8h91v8" fill="none" stroke="#111" stroke-width="1.500" />
                  <text class="lbl plain" x="598" y="426">20 km</text>
                  <g fill="#8c1196"><circle v-for="(c, i) in [[1016, 410], [1012, 418], [1021, 416], [1027, 417], [1034, 416], [1018, 436], [1040, 438], [1009, 463]]" :key="i" :cx="c[0]" :cy="c[1]" r="7" /></g>
                  <text class="pinno" x="1010" y="419">11</text><text class="pinno" x="1021" y="419">11</text><text class="pinno" x="1031" y="419">18</text><text class="pinno" x="1013" y="440">17</text>
                  <path d="M1009 461l18-22M1014 461l16-16" stroke="#4a1208" stroke-width="2" /><path d="M1012 461l16-18" stroke="#e32a1a" stroke-width="2" />
                  <circle cx="1027" cy="447" r="7" fill="#ee1c1c" /><path d="M1023 448h8" stroke="#fff" stroke-width="3" />
                  <circle cx="1008" cy="423" r="7" fill="#ffff00" /><path d="M1008 418l3 10h-6z" fill="#fff" />
                  <path d="M1014 418h88v11h-88zM1036 431h64v10h-64z" fill="#ffff00" /><path d="M1036 442h63v10h-63z" fill="#f00" />
                  <path d="M1027 430l7 17h-14z" fill="#11d91b" stroke="#111" stroke-width="1.500" />
                  <text class="lbl" x="1015" y="427">ГАЗЕЛЬ - CAN и ГБО</text><text class="lbl" x="1037" y="439">УАЗ - К964СУ</text><text class="lbl" x="1037" y="450">УАЗ - К375РН</text>
                </g>
              </svg>
            </div>
            <div class="mstatus"><span class="t">Время: 02.03.21 06:57</span><span class="s">Скорость: 9,00</span><span>Пройдено: 0,00 km</span></div>
            <div class="mslider">
              <span class="coords">N54°8,20179' : E43°55,07080'</span>
              <input v-model="position" type="range" min="0" max="100" aria-label="Позиция" />
              <div class="spin"><input v-model="speedStep" type="text" aria-label="Шаг" /><div><button aria-label="Больше"><svg viewBox="0 0 6 4" class="tiny"><path d="M3 0l3 4H0z" /></svg></button><button aria-label="Меньше"><svg viewBox="0 0 6 4" class="tiny"><path d="M0 0h6L3 4z" /></svg></button></div></div>
            </div>
          </section>
        </div>
      </div>
    </main>

    <section class="charts">
      <div class="cap active"><svg class="i14"><use href="#plot" /></svg><span>Графики</span><i class="grip"></i><svg class="pin"><use href="#pin" /></svg></div>
      <div class="chartbody">
        <div class="plist">
          <div class="pitems">
            <label v-for="p in params" :key="p.name" :class="{ sel: p.name === selected }"><input v-model="p.on" type="checkbox" /><span>{{ p.name }}</span></label>
          </div>
          <div class="pfoot"><button class="hat">/\  /\  /\</button><button class="cfg">Настройки</button></div>
        </div>
        <svg class="plotarea">
          <g transform="translate(-114 -509)">
            <path v-for="v in speedTicks" :key="'h' + v" :d="`M204 ${speedY(v)}H1540`" stroke="#d6d6d6" stroke-width="1.500" />
            <path v-for="t in times" :key="'v' + t.label" :d="`M${t.x} 514V777`" stroke="#d3d3d3" stroke-width="1.500" />
            <path d="M203 513H1540" stroke="#8c8c8c" stroke-width="2" />
            <g v-for="s in traces" :key="s.x" :transform="`translate(${s.x} 500) scale(.33333)`" fill="none" stroke-width="5" stroke-linejoin="bevel">
              <path :d="s.speed" stroke="#4a6baa" /><path :d="s.rpm" stroke="#f59f38" />
            </g>
            <path d="M203 512V780M203 779H1540" stroke="#111" stroke-width="2" fill="none" />
            <path d="M201 512V779" stroke="#3c5c9e" />
            <path d="M164 512V778" stroke="#f59f38" stroke-width="2" />
            <path v-for="v in rpmMinor" :key="'rm' + v" :d="`M161 ${rpmY(v)}h2`" stroke="#888" />
            <path v-for="v in speedMinor" :key="'sm' + v" :d="`M199 ${speedY(v)}h2`" stroke="#888" />
            <path v-for="x in timeMinor" :key="'tm' + x" :d="`M${x} 780v2`" stroke="#888" />
            <g class="ax">
              <g v-for="v in rpmTicks" :key="'r' + v"><path :d="`M160 ${rpmY(v)}h3`" stroke="#777" /><text text-anchor="end" x="159" :y="rpmY(v) + 3">{{ rpmText(v) }}</text></g>
              <g v-for="v in speedTicks" :key="'s' + v"><path :d="`M197 ${speedY(v)}h4`" stroke="#777" /><text text-anchor="end" x="196" :y="speedY(v) + 3">{{ v }}</text></g>
              <g v-for="t in times" :key="t.label"><path :d="`M${t.x} 780v4`" stroke="#777" /><text text-anchor="middle" :x="t.x + 1" y="793">{{ t.label }}</text></g>
              <text class="axt" text-anchor="middle" transform="translate(126 643) rotate(-90)">CAN.Обороты(5)</text>
              <text class="axt" text-anchor="middle" transform="translate(174 643) rotate(-90)">Скорость</text>
              <path d="M206 752h8v12h-8z" fill="#f59f38" /><path d="M206 764h8v11h-8z" fill="#3f5f9f" />
              <text x="207" y="762">0</text><text x="207" y="773">0</text>
            </g>
          </g>
        </svg>
        <div class="mark markplot"></div>
        <div class="mark markitem"></div>
      </div>
      <div class="tabs btabs"><button>Точки</button><button class="on">Графики</button></div>
    </section>

    <footer class="status">
      <span class="ready">Готов</span>
      <span class="dev">4No<i></i></span>
      <div class="progress"><div class="fill"></div></div>
    </footer>
    <div class="mark markcol"></div>
  </div>
</template>

<style>
body { margin: 0; background: #f0f0f0; }
</style>

<style scoped>
* { box-sizing: border-box; }
.app { position: relative; min-height: 100vh; background: #f0f0f0; color: #111; font: 9px/12px "Liberation Sans", Arial, sans-serif; overflow: hidden; display: flex; flex-direction: column; }
.defs { position: absolute; }
button { font: inherit; color: inherit; background: none; border: 0; padding: 0; margin: 0; }
input, textarea { font: inherit; color: inherit; border-radius: 0; }
svg { flex: none; display: block; }
.i8 { width: 8px; height: 8px; } .i10 { width: 10px; height: 10px; } .i12 { width: 12px; height: 12px; } .i14 { width: 14px; height: 14px; } .i26 { width: 26px; height: 26px; }
.caret { width: 6px; height: 4px; }
.grow { flex: 1; }

.titlebar { height: 18px; background: #0078d7; color: #fff; display: flex; align-items: center; padding-left: 2px; font: 9px/12px "Open Sans", sans-serif; }
.titlebar .i12 { margin-right: 4px; }
.win { width: 36px; height: 18px; display: flex; align-items: center; justify-content: center; }
.win:last-child { margin-right: 3px; }
.menubar { height: 16px; background: #fff; display: flex; gap: 12px; padding-left: 5px; font: 9px/16px "Open Sans", sans-serif; }
.toolbar { height: 48px; display: flex; background: linear-gradient(#fdfdfd, #ececec 50%, #d4d4d4); border-bottom: 1px solid #dcdcdc; }
.tgroup { display: flex; margin: 2px 4px 2px 0; padding-right: 2px; border-right: 1px solid #8a8a8a; }
.tgroup:nth-child(2) { padding-right: 1px; }
.tgroup:nth-child(3) { padding-right: 5px; margin-right: 1px; }
.tgroup:last-child { border: 0; }
.tool { width: 58px; display: flex; flex-direction: column; align-items: center; padding-top: 1px; }
.tool:disabled { color: #8b8b8b; }
.tmenu { width: 10px; display: flex; align-items: center; justify-content: center; padding-top: 4px; }

.infostrip { height: 25px; padding: 1px 5px 0; color: #777; }
.infobar { width: 128px; height: 4px; background: #777; }
.infotext { display: flex; align-items: center; gap: 2px; height: 19px; white-space: nowrap; }

.workspace { display: flex; gap: 3px; padding: 0 5px; height: 382px; }
.cap { height: 17px; flex: none; background: #c0c0c0; display: flex; align-items: center; gap: 2px; padding: 0 5px 0 4px; white-space: nowrap; }
.grip { flex: 1; height: 7px; margin: 0 4px; background-image: radial-gradient(circle, #adadad 1px, transparent 1px); background-size: 4px 4px; }
.pin { width: 8px; height: 11px; }
.cap.active { background: #0078d7; color: #fff; }
.cap.active .grip { background-image: radial-gradient(circle, #2389de 1px, transparent 1px); }

.side { width: 132px; display: flex; flex-direction: column; }
.filter { padding: 0 3px 2px; border-bottom: 1px solid #aaa; border-right: 1px solid #aaa; }
.filtertop { display: flex; }
.fields { flex: 1; min-width: 0; overflow: hidden; padding-top: 3px; white-space: nowrap; }
.fields > label { display: block; height: 12px; }
.fields > .second { margin-top: 3px; }
.dt { display: flex; justify-content: space-between; height: 15px; }
.dt input { width: 84px; border: 0; padding: 0 0 3px; background: #fff; white-space: pre; }
.dt button { width: 17px; height: 14px; align-self: flex-end; background: #e1e1e1; border: 1px solid #adadad; border-right: 0; line-height: 12px; }
.fields > .chk { display: flex; align-items: center; height: 13px; gap: 3px; }
.fields > .first { margin-top: 6px; }
input[type="checkbox"] { appearance: none; flex: none; width: 11px; height: 11px; margin: 0; background: #fff; border: 1px solid #444; }
input[type="checkbox"]:checked::before { content: ""; display: block; width: 6px; height: 3px; margin: 1px; border: solid #222; border-width: 0 0 1px 1px; transform: rotate(-45deg); }
.quick { width: 18px; display: grid; gap: 1px; grid-auto-rows: 18px; padding-top: 8px; }
.quick button { background: #e1e1e1; border: 1px solid #adadad; color: #444; }
.apply { display: block; width: 125px; height: 14px; margin-top: 4px; background: #e1e1e1; border: 1px solid #adadad; line-height: 12px; }
.tree { flex: 1; margin: 0; padding: 0 0 0 5px; list-style: none; background: #fff; white-space: nowrap; }
.tree li { display: flex; align-items: center; height: 13px; gap: 4px; }
.tree .child { padding-left: 23px; margin-left: 5px; border-left: 1px dotted #999; }
.chev { width: 8px; height: 8px; }
.node { display: flex; align-items: center; height: 13px; gap: 4px; padding-right: 3px; }
.node b { background: #eee; font-size: 7px; height: 9px; line-height: 9px; width: 15px; display: flex; justify-content: center; }
.yellow { background: #ff0; } .red { background: #f00; } .period { background: #d9d9d9; padding-left: 1px; }

.content { flex: 1; min-width: 0; display: flex; flex-direction: column; gap: 4px; }
.upper { display: flex; gap: 4px; height: 233px; }
.trips { flex: 1; min-width: 0; display: flex; flex-direction: column; }
.tripbox { flex: 1; background: #fff; padding-left: 2px; display: flex; flex-direction: column; justify-content: space-between; overflow: hidden; }
.triptable { width: 100%; height: 184px; table-layout: fixed; border-collapse: collapse; white-space: nowrap; }
.triptable th, .stable th { font-weight: normal; text-align: left; padding: 0 0 0 4px; border-right: 1px solid #e0e0e0; }
.triptable th { height: 21px; }
.triptable td { padding: 0 0 0 4px; line-height: 13px; overflow: hidden; }
.triptable .num svg { display: inline-block; vertical-align: middle; margin-right: 3px; }
.triptable th svg { margin-left: 1px; }
.cal { width: 10px; height: 11px; }
.triptable td.flags { padding-left: 0; }
.flags svg { display: inline-block; vertical-align: middle; }
.current { background: #d9d9d9; }
.c1 { width: 29px; } .c2 { width: 76px; } .c3 { width: 77px; } .c4 { width: 95px; } .c5 { width: 40px; } .c6 { width: 58px; } .c7 { width: 39px; } .c8 { width: 59px; } .c9 { width: 29px; } .c10 { width: 164px; } .c11 { width: 174px; } .c12 { width: 161px; } .c13 { width: 164px; }
.hscroll { height: 14px; display: flex; align-items: center; background: #f2f2f2; }
.hscroll button { width: 13px; display: flex; justify-content: center; }
.track { flex: 1; } .thumb { width: 77%; height: 12px; background: #cdcdcd; }
.notes { width: 113px; display: flex; flex-direction: column; }
.notes textarea { flex: 1; resize: none; background: #fff; border: 1px solid #8c8c8c; border-top: 0; margin: 0; }
.tabs { display: flex; height: 16px; color: #777; }
.tabs button { padding: 0 4px; }
.tabs .on { background: #fafafa; color: #444; }
.tabs button + button { border-left: 1px solid #d5d5d5; }

.lower { display: flex; gap: 4px; height: 145px; }
.summary { width: 350px; display: flex; flex-direction: column; }
.stabs { display: flex; height: 17px; border-bottom: 2px solid #c0c0c0; color: #888; padding-left: 4px; white-space: nowrap; }
.stabs button { display: flex; align-items: center; gap: 3px; margin-right: 5px; }
.stabs .on { background: #c0c0c0; color: #111; padding: 0 3px; margin: 0 3px 0 -3px; }
.scrolls { margin-left: auto; display: flex; gap: 4px; align-items: center; padding-right: 3px; }
.stools { display: flex; height: 22px; padding-left: 3px; align-items: center; }
.stools button { width: 20px; display: flex; justify-content: center; }
.gap { width: 14px; }
.sbox { flex: 1; background: #fff; border: 1px solid #8d949c; }
.stable { width: 100%; table-layout: fixed; border-collapse: collapse; }
.stable th { height: 20px; padding-left: 5px; }
.stable th:last-child { border: 0; }
.s1 { width: 40px; } .s2 { width: 80px; } .s3 { width: 72px; } .s4 { width: 64px; }

.map { flex: 1; min-width: 0; display: flex; flex-direction: column; border-right: 1px solid #c4c4c4; border-bottom: 1px solid #a5a5a5; }
.mtools { display: flex; height: 20px; align-items: center; border-bottom: 1px solid #fff; }
.mg { display: flex; height: 18px; } .mg button { flex: 1; display: flex; align-items: center; justify-content: center; }
.g3 { width: 55px; } .g6 { width: 112px; } .g9 { width: 166px; }
.drop { width: 30px; height: 18px; display: flex; align-items: center; justify-content: space-evenly; }
.mtools .on { background: #c3e0f7; }
.vsep { width: 1px; height: 15px; background: #a0a0a0; margin: 0 2px 0 3px; }
.search { display: flex; height: 20px; align-items: center; padding-left: 38px; }
.search input { height: 17px; background: #fff; border: 1px solid #7a7a7a; padding: 0 3px; }
.search label { margin-right: 5px; }
.city { width: 116px; margin-right: 12px; } .addr { width: 187px; margin-right: 12px; }
.search button { width: 51px; height: 16px; background: #e1e1e1; border: 2px solid #0078d7; line-height: 12px; }
.maprow { display: flex; flex: 1; min-height: 0; border-top: 1px solid #999; }
.splitter { width: 6px; background: #fff; border: solid #b5b5b5; border-width: 0 1px; display: flex; align-items: center; }
.splitter span { width: 4px; height: 22px; background: #cfe6fa; border: 1px solid #4a9be0; }
.canvas { flex: 1; min-width: 0; height: 60px; overflow: hidden; }
.places text { font: 10px Roboto, sans-serif; fill: #6b6f70; stroke: #fff; stroke-width: 2px; paint-order: stroke; text-anchor: middle; }
.lbl { font: bold 9px Roboto, sans-serif; fill: #111; }
.plain { font: 9px "Open Sans", sans-serif; }
.pinno { font: bold 9px Roboto, sans-serif; fill: #fff; }
.mstatus, .mslider { font: 9px/13px "Open Sans", sans-serif; display: flex; padding-left: 1px; white-space: nowrap; }
.mstatus { height: 13px; } .mstatus .t { width: 122px; } .mstatus .s { width: 80px; }
.mslider { height: 14px; align-items: center; border-top: 1px solid #fff; }
.coords { width: 127px; border-right: 1px solid #d5d5d5; margin-right: 9px; }
.mslider input[type="range"] { appearance: none; flex: 1; margin: 0 10px 0 0; height: 13px; background: linear-gradient(#d6d6d6, #d6d6d6) center / 100% 2px no-repeat; }
.mslider input[type="range"]::-webkit-slider-thumb { appearance: none; width: 9px; height: 13px; background: #0078d7; border-radius: 0 0 4px 4px; }
.spin { width: 40px; height: 13px; display: flex; background: #fff; border: 1px solid #999; }
.spin input { width: 26px; border: 0; padding: 0 2px 0 0; background: none; text-align: right; height: 11px; }
.spin div { flex: 1; display: flex; flex-direction: column; }
.spin button { flex: 1; background: #eee; border: 1px solid #bbb; display: flex; justify-content: center; align-items: center; }
.tiny { width: 4px; height: 2px; }

.charts { margin: 3px 5px 0; }
.chartbody { position: relative; display: flex; height: 287px; border-bottom: 1px solid #a5a5a5; border-right: 1px solid #c4c4c4; }
.plist { width: 109px; display: flex; flex-direction: column; }
.pitems { background: #fff; height: 273px; border: solid #bbb; border-width: 0 1px 1px; padding: 2px 0 81px 4px; display: flex; flex-direction: column; overflow: hidden; }
.pitems label { flex: 1; display: flex; align-items: center; gap: 3px; white-space: nowrap; }
.pitems span { flex: 1; min-width: 0; overflow: hidden; padding-left: 1px; line-height: 13px; }
.sel span { background: #0078d7; color: #fff; }
.pfoot { display: flex; justify-content: space-between; align-items: center; flex: 1; padding: 0 7px 0 1px; }
.hat { width: 50px; height: 9px; line-height: 7px; background: #e1e1e1; border: 1px solid #adadad; white-space: pre; }
.plotarea { flex: 1; min-width: 0; height: 286px; overflow: hidden; }
.ax text { font: 9px "Liberation Sans", Arial, sans-serif; fill: #222; }
.ax .axt { font-weight: bold; fill: #111; }
.btabs { height: 16px; }
.btabs .on { background: #fafafa; }
.status { height: 15px; margin-top: auto; display: flex; align-items: center; border-top: 1px solid #d5d5d5; font: 9px/13px "Open Sans", sans-serif; }
.ready { width: 80px; padding-left: 2px; border-right: 1px solid #ccc; }
.dev { width: 104px; padding-left: 3px; border-right: 1px solid #ccc; display: flex; align-items: center; }
.dev i { width: 36px; height: 9px; margin-left: -5px; background: #fff; border-radius: 8px 6px 12px 14px; }
.progress { width: 370px; height: 7px; margin-left: 3px; background: #e6e6e6; border: 1px solid #bcbcbc; }
.fill { width: 29%; height: 5px; background: #0078d7; }
.mark { position: absolute; border: 4px solid #ff1a40; pointer-events: none; }
.markcol { left: 965px; top: 88px; width: 212px; height: 282px; }
.markplot { left: 394px; top: 9px; width: 301px; height: 257px; }
.markitem { left: -2px; top: 53px; width: 120px; height: 24px; }
</style>
